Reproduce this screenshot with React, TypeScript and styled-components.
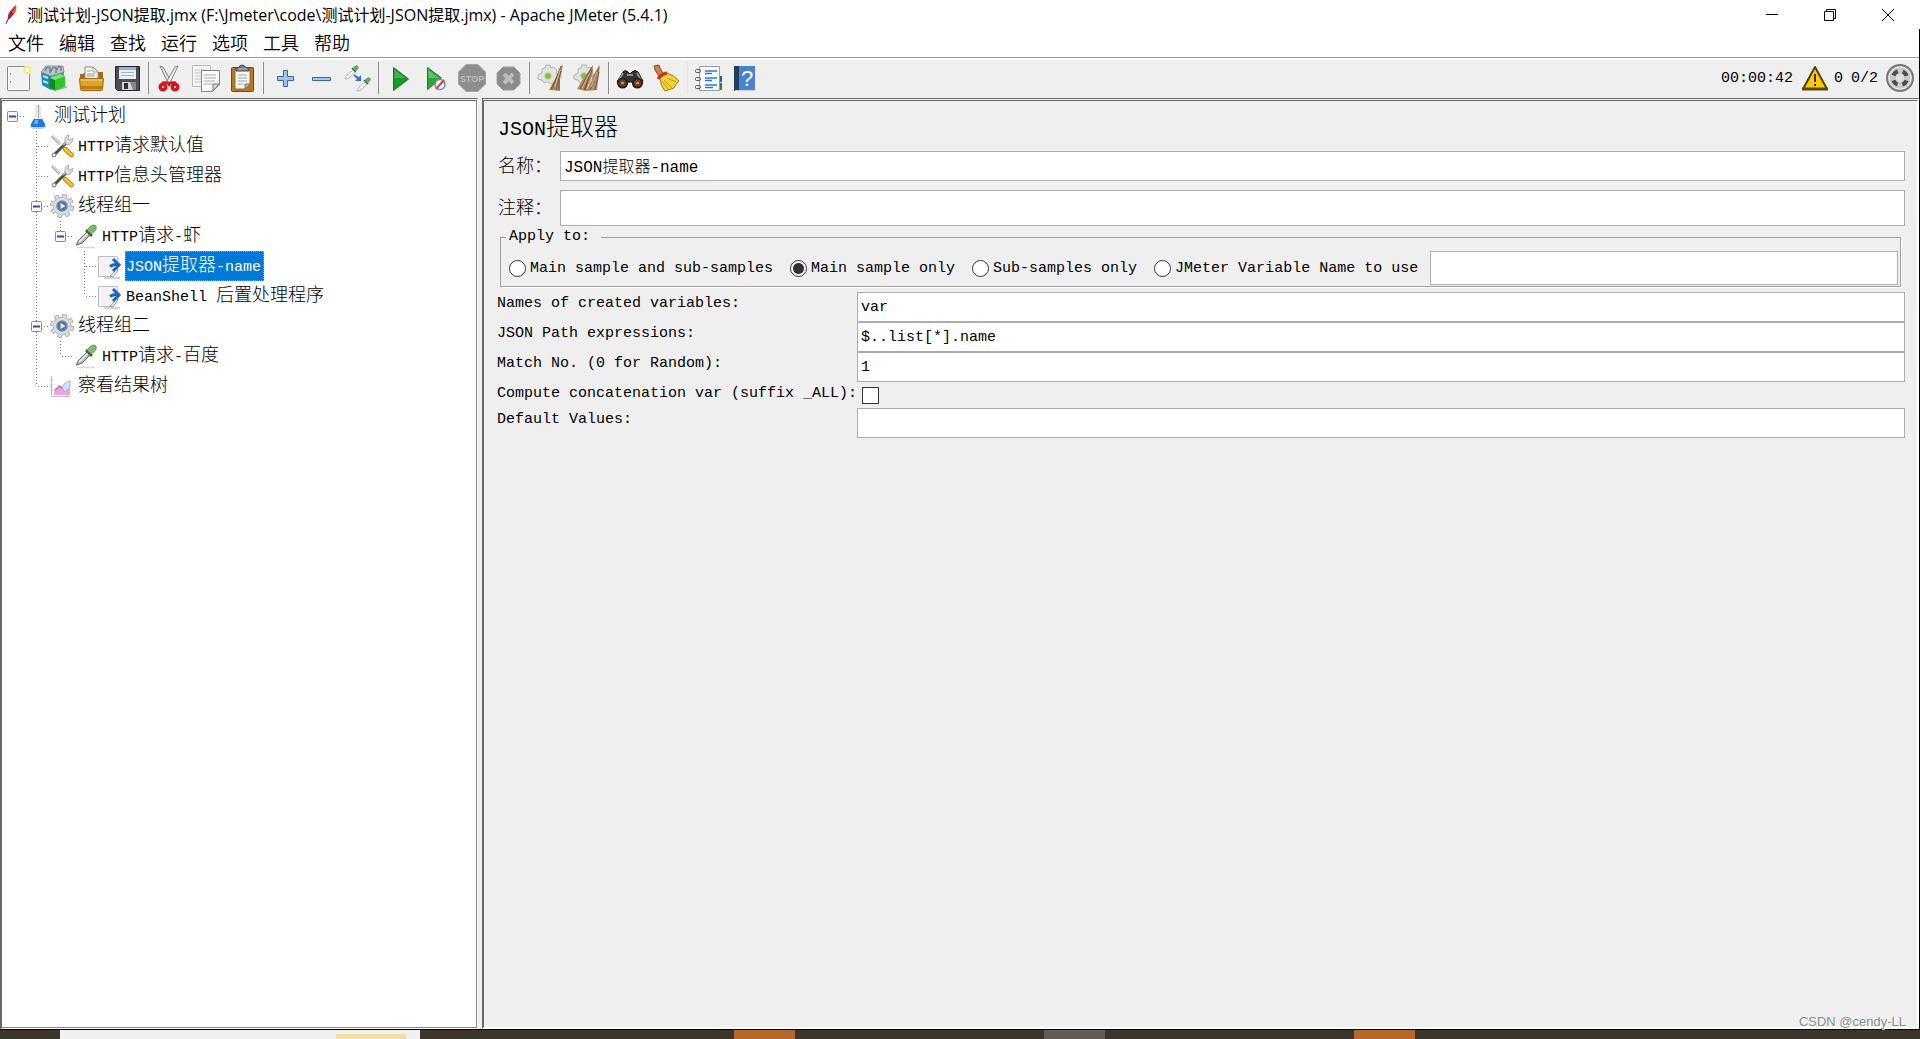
import React, { useState } from 'react';
import styled, { createGlobalStyle, css } from 'styled-components';

const mono = "'Liberation Mono', 'Noto Sans CJK SC', monospace";
const ui = "'Open Sans', 'Noto Sans CJK SC', sans-serif";

const GlobalStyle = createGlobalStyle`
  *, *::before, *::after { box-sizing: border-box; }
  body { margin: 0; background: #efefef; color: #000; font-family: ${mono}; font-size: 15px; overflow: hidden; }
  button, input { font: inherit; color: inherit; }
`;

/* ---------- shell ---------- */
const Page = styled.div`
  height: 100vh;
  display: flex;
  flex-direction: column;
`;
const TitleBar = styled.header`
  display: flex;
  align-items: center;
  height: 29px;
  padding: 0 3px 0 5px;
  background: #fff;
  font-family: ${ui};
`;
const WindowTitle = styled.h1`
  flex: 1;
  margin: 0 0 0 8px;
  font-size: 16px;
  font-weight: 400;
  line-height: 28px;
  white-space: nowrap;
`;
const WindowButton = styled.button`
  display: grid;
  place-items: center;
  width: 58px;
  height: 28px;
  padding: 0;
  border: 0;
  background: none;
`;
const Frame = styled.div`
  flex: 1;
  min-height: 0;
  display: flex;
  flex-direction: column;
  border-right: 1px solid #000;
  border-bottom: 1px solid #000;
`;
const MenuBar = styled.nav`
  display: flex;
  gap: 1px;
  height: 29px;
  padding: 0 1px 2px;
  background: #fff;
  border-bottom: 1px solid #a0a0a0;
`;
const MenuButton = styled.button`
  padding: 0 7px;
  border: 0;
  background: none;
  font-family: 'Noto Sans CJK SC', sans-serif;
  font-size: 18px;
  font-weight: 350;
  line-height: 24px;
`;
const Toolbar = styled.div`
  display: flex;
  align-items: center;
  height: 40px;
  padding: 0 5px 2px 1px;
  border-top: 2px solid #fff;
  background: #efefef;
`;
const ToolButton = styled.button`
  display: grid;
  place-items: center;
  width: 36px;
  height: 36px;
  padding: 0;
  border: 0;
  background: none;
`;
const Separator = styled.span<{ $faint?: boolean }>`
  width: 1px;
  height: 32px;
  margin: 0 3px;
  background: ${p => (p.$faint ? '#e6e6e6' : '#8c8c8c')};
`;
const Status = styled.div`
  display: flex;
  align-items: center;
  gap: 8px;
  margin-left: auto;
  white-space: pre;
`;
const Warnings = styled.span`
  display: flex;
  align-items: center;
  gap: 5px;
`;
const Split = styled.main`
  flex: 1;
  min-height: 0;
  display: flex;
  gap: 4px;
`;

/* ---------- text ---------- */
const Han = styled.span<{ $large?: boolean }>`
  font-family: 'Noto Sans CJK SC', sans-serif;
  font-size: ${p => (p.$large ? 24 : 18)}px;
  font-weight: 300;
  line-height: 1;
`;
function Mixed({ children, large }: { children: string; large?: boolean }) {
  return (
    <>
      {children.split(/([\u4e00-\u9fff\uff1a]+)/).map((part, i) =>
        i % 2 ? <Han key={i} $large={large}>{part}</Han> : part
      )}
    </>
  );
}

/* ---------- tree ---------- */
const bevel = css`
  border-top: 3px double #696969;
  border-left: 2px solid #696969;
`;
const TreePane = styled.aside`
  ${bevel}
  flex: 0 0 478px;
  display: flex;
  border-right: 1px solid #fff;
  border-bottom: 1px solid #fff;
`;
const TreeList = styled.ul`
  flex: 1;
  margin: 0;
  padding: 0;
  list-style: none;
  background: #fff;
  border-right: 1px solid #828790;
  border-bottom: 1px solid #828790;
`;
const TreeRow = styled.li`
  display: flex;
  align-items: center;
  height: 30px;
  white-space: pre;
  svg { flex: none; }
`;
const Guides = styled.span`
  display: flex;
`;
const NodeLabel = styled.button<{ $selected?: boolean }>`
  height: 30px;
  margin-left: 3px;
  padding: 1px 2px 0 0;
  border: 1px dotted ${p => (p.$selected ? '#ff8728' : 'transparent')};
  background: ${p => (p.$selected ? '#0078d7' : 'none')};
  color: ${p => (p.$selected ? '#fff' : '#000')};
  line-height: 24px;
  white-space: pre;
`;

type GuideKind = 'blank' | 'line' | 'tee' | 'ell' | 'root' | 'open' | 'openLast';
function Guide({ kind }: { kind: GuideKind }) {
  const box = kind === 'root' || kind === 'open' || kind === 'openLast';
  const dash = { stroke: '#808080', strokeDasharray: '1 2', fill: 'none' };
  return (
    <svg width="24" height="30" viewBox="0 0 24 30">
      {(kind === 'line' || kind === 'tee' || kind === 'open') && <path d="M10.500 0V30" {...dash} />}
      {(kind === 'ell' || kind === 'openLast') && <path d="M10.500 0V15" {...dash} />}
      {kind !== 'line' && kind !== 'blank' && <path d="M12 15.500H22" {...dash} />}
      {box && (
        <>
          <rect x="5.500" y="10.500" width="10" height="10" rx="1" fill="#f7f7f7" stroke="#8a8a8a" />
          <path d="M7 15.500H14" stroke="#2c4f9e" strokeWidth="2" />
        </>
      )}
    </svg>
  );
}

const Flask = () => (
  <svg width="24" height="28" viewBox="0 0 24 28">
    <ellipse cx="12" cy="25" rx="8" ry="2" fill="#c4c4c4" />
    <path d="M10 4h4v9l5 9q1 3-2 3H7q-3 0-2-3l5-9z" fill="#eceff4" stroke="#d3d8df" />
    <path d="M8 17h8l3 5q1 3-2 3H7q-3 0-2-3z" fill="#1d79dc" />
    <path d="M9 18h3v4H8z" fill="#65b4ff" />
    <path d="M12.500 3v13" stroke="#a6adb8" />
  </svg>
);
const Tools = () => (
  <svg width="24" height="26" viewBox="0 0 24 26">
    <path d="M2 3l8 8" stroke="#b0b0b0" strokeWidth="3" />
    <path d="M3 3l7 8" stroke="#eee" />
    <path d="M4 22L17 9" stroke="#4d4d4d" strokeWidth="3" strokeLinecap="round" />
    <path d="M13 12l5-5" stroke="#b0b0b0" strokeWidth="2" />
    <path d="M15 9q-1-6 4-7l-1 4 2 1 3-2q0 6-6 7z" fill="#ddd" stroke="#a0a0a0" strokeWidth=".8" />
    <circle cx="4" cy="22" r="2" fill="#eee" stroke="#777" />
    <path d="M15 16l6.500 6" stroke="#b27d0a" strokeWidth="4.500" strokeLinecap="round" />
    <path d="M15 16l6.500 6" stroke="#fbc62c" strokeWidth="3" strokeLinecap="round" />
  </svg>
);
const Gear = () => (
  <svg width="24" height="26" viewBox="0 0 24 26">
    <circle cx="12" cy="13" r="10" fill="none" stroke="#8e8e8e" strokeWidth="4" strokeDasharray="4.400 3.454" />
    <circle cx="12" cy="13" r="9" fill="#dcdcdc" stroke="#a2a2a2" strokeWidth=".8" />
    <circle cx="12" cy="13" r="10" fill="none" stroke="#dcdcdc" strokeWidth="3" strokeDasharray="3.400 4.454" strokeDashoffset="-.5" />
    <circle cx="12" cy="13" r="5" fill="#4b75ad" stroke="#7287a6" strokeWidth="1.500" />
    <path d="M10.500 10l5 3-5 3z" fill="#eaf2fc" />
  </svg>
);
const Dropper = () => (
  <svg width="24" height="26" viewBox="0 0 24 26">
    <path d="M3 24.500h18" stroke="#d8d8d8" strokeWidth="1.500" />
    <path d="M2 22l3-5 8-8 3 3-8 8-5 2z" fill="#bbb" stroke="#666" />
    <path d="M5 19l9-9" stroke="#f4f4f4" strokeWidth="1.500" />
    <path d="M12 7l6 6" stroke="#3c5c38" strokeWidth="2.500" />
    <path d="M13 7q3-5 8-5 4 4-4 9z" fill="#7fbd6a" stroke="#4d9240" strokeWidth=".8" />
  </svg>
);
const PostProcessor = () => (
  <svg width="24" height="26" viewBox="0 0 24 26">
    <path d="M6 25h16" stroke="#c4c4c4" strokeWidth="1.500" />
    <path d="M.500 3.500h19v14l-6 6H.500z" fill="#f3f3f3" stroke="#c0c0c0" />
    <path d="M12 23q4-2 6-8l2 2-5 7z" fill="#fff" stroke="#777" strokeWidth=".8" />
    <path d="M12 13.500q4-3 9-1.500M15 6l6 6-6 6" fill="none" stroke="#1c63c4" strokeWidth="3" />
  </svg>
);
const Chart = () => (
  <svg width="24" height="26" viewBox="0 0 24 26">
    <path d="M4 22v-5l5-4 6 4 5-3v8z" fill="#eda6d8" />
    <path d="M5 17l5-4 5 5" fill="none" stroke="#db5cae" strokeWidth="1.500" />
    <path d="M12 15q2-6 8-7v6l-5 5z" fill="#cfe2fb" stroke="#8eb6ee" />
    <path d="M1.500 3v20.500H21M0 7h3M0 12h3M0 17h3" fill="none" stroke="#c4bdc9" />
  </svg>
);

type Node = { label: string; icon: React.FC; guides: GuideKind[] };
const nodes: Node[] = [
  { label: '测试计划', icon: Flask, guides: ['root'] },
  { label: 'HTTP请求默认值', icon: Tools, guides: ['blank', 'tee'] },
  { label: 'HTTP信息头管理器', icon: Tools, guides: ['blank', 'tee'] },
  { label: '线程组一', icon: Gear, guides: ['blank', 'open'] },
  { label: 'HTTP请求-虾', icon: Dropper, guides: ['blank', 'line', 'openLast'] },
  { label: 'JSON提取器-name', icon: PostProcessor, guides: ['blank', 'line', 'blank', 'tee'] },
  { label: 'BeanShell 后置处理程序', icon: PostProcessor, guides: ['blank', 'line', 'blank', 'ell'] },
  { label: '线程组二', icon: Gear, guides: ['blank', 'open'] },
  { label: 'HTTP请求-百度', icon: Dropper, guides: ['blank', 'line', 'ell'] },
  { label: '察看结果树', icon: Chart, guides: ['blank', 'ell'] },
];

/* ---------- editor ---------- */
const Editor = styled.section`
  ${bevel}
  flex: 1;
  min-width: 0;
  padding: 12px 12px 0 13px;
  border-right: 2px solid #fff;
  border-bottom: 2px solid #fff;
`;
const Heading = styled.h2`
  margin: 0 0 5px;
  padding-left: 1px;
  font-size: 20px;
  font-weight: 400;
  line-height: 33px;
`;
const FieldRow = styled.div<{ $tall?: boolean }>`
  display: grid;
  grid-template-columns: 63px 1fr;
  align-items: center;
  height: ${p => (p.$tall ? 36 : 30)}px;
  margin-bottom: ${p => (p.$tall ? 0 : 9)}px;
  line-height: 24px;
`;
const FieldLabel = styled.label`
  padding: 3px 0 0 1px;
`;
const TextInput = styled.input<{ $large?: boolean }>`
  min-width: 0;
  width: 100%;
  height: 100%;
  padding: ${p => (p.$large ? '0 3px 3px' : '0 3px')};
  border: 1px solid #abadb3;
  border-radius: 0;
  background: #fff;
  font-size: ${p => (p.$large ? 16 : 15)}px;
  font-weight: ${p => (p.$large ? 300 : 400)};
  outline: 0;
`;
const ApplyTo = styled.fieldset`
  display: flex;
  align-items: center;
  min-width: 0;
  margin: 0 4px 5px 3px;
  padding: 3px 2px 1px 8px;
  border: 1px solid #a0a0a0;
  box-shadow: 1px 1px 0 #fff;
`;
const Legend = styled.legend`
  width: 95px;
  margin-left: -3px;
  padding: 0 3px;
  line-height: 22px;
`;
const Option = styled.label`
  display: flex;
  align-items: center;
  gap: 4px;
  margin-right: 17px;
  white-space: nowrap;
  &:last-of-type { margin-right: 12px; }
`;
const Radio = styled.input`
  appearance: none;
  width: 17px;
  height: 17px;
  margin: 0;
  border: 1px solid #333;
  border-radius: 50%;
  background: #fff;
  &:checked { background: radial-gradient(circle, #333 5px, #fff 6px); }
`;
const VariableField = styled.div`
  flex: 1;
  height: 34px;
`;
const Properties = styled.div`
  display: grid;
  grid-template-columns: auto 1fr;
  grid-template-rows: 30px 30px 30px 26px 30px;
`;
const PropertyLabel = styled.label`
  line-height: 24px;
  white-space: nowrap;
`;
const Checkbox = styled.input`
  appearance: none;
  width: 17px;
  height: 17px;
  margin: 5px;
  border: 1px solid #333;
  background: #fff;
  &:checked { background: #333; box-shadow: inset 0 0 0 3px #fff; }
`;

/* ---------- desktop strip ---------- */
const Taskbar = styled.footer`
  display: flex;
  flex: none;
  height: 9px;
  overflow: hidden;
  background: #3c352b;
`;
const TaskSlot = styled.span<{ $width: number; $color?: string; $inset?: boolean }>`
  width: ${p => p.$width}px;
  border-top: ${p => (p.$inset ? '4px solid #f0f0f0' : '0')};
  background: ${p => p.$color ?? 'transparent'};
`;
const Watermark = styled.span`
  position: absolute;
  right: 14px;
  bottom: 8px;
  color: #8a8a8a;
  font: 14px/18px 'Liberation Sans', sans-serif;
  font-size: 13px;
  text-shadow: 1px 1px 0 #fff;
`;

/* ---------- toolbar icons ---------- */
const Icon = ({ children }: { children: React.ReactNode }) => (
  <svg width="28" height="28" viewBox="0 0 28 28" fill="none" aria-hidden="true">{children}</svg>
);
const NewIcon = () => (
  <Icon>
    <rect x="2.500" y="2.500" width="22" height="24" rx="1" fill="#f1f1f1" stroke="#858585" />
    <rect x="3.500" y="3.500" width="20" height="22" stroke="#fff" />
    <path d="M5.500 9v2M5.500 17v2" stroke="#999" />
    <circle cx="22.500" cy="6" r="4.500" fill="#f8f0a0" />
    <path d="M22.500 2v8M18.500 6h8M20 3.500l5 5M25 3.500l-5 5" stroke="#f2e24a" />
    <circle cx="22.500" cy="6" r="2" fill="#fffde8" />
  </Icon>
);
const TemplatesIcon = () => (
  <Icon>
    <path d="M0 8l10 3v15l-9-5z" fill="#1b86ba" />
    <path d="M10 11l13-4v14l-13 5z" fill="#3c9cc8" />
    <path d="M0 8L5 2h17l1 6-13 4z" fill="#b6c3c8" stroke="#8b979c" />
    <path d="M4 7q1-5 5-3v5M10 8q1-6 5-4v5M16 6q1-5 4-3v4" stroke="#76858c" strokeWidth="1.500" />
    <path d="M2 12l5 2M2 17l5 2" stroke="#bce7fb" strokeWidth="2" />
    <path d="M9 14l5 2v11l-5-3z" fill="#138a17" />
    <path d="M14 16l10-4v11l-10 4z" fill="#2fc52d" />
    <path d="M9 14l10-4 5 2-10 4z" fill="#7be960" />
    <path d="M24 22l3 1-11 4z" fill="#aaa" />
  </Icon>
);
const OpenIcon = () => (
  <Icon>
    <path d="M3 10h3l2-2h18v16H3z" fill="#a86d10" />
    <path d="M8 15V3h8l5 5v8z" fill="#fafafa" stroke="#888" />
    <path d="M16 3v5h5M10 7h4M10 10h8M10 12h8" stroke="#999" />
    <path d="M2.500 14.500h24l-1 11q0 1-1 1h-20q-1 0-1-1z" fill="#dfa02e" stroke="#a56a0c" />
    <path d="M4 16h21" stroke="#f7d383" />
    <path d="M4 22h21v3H4z" fill="#bf7d13" />
  </Icon>
);
const SaveIcon = () => (
  <Icon>
    <path d="M2.500 2.500h24v24h-22l-2-2z" fill="#4b4f55" stroke="#25282b" />
    <path d="M6 3h17v12H6z" fill="#eaf1f8" />
    <path d="M6 3h17v3H6z" fill="#8ab5e2" />
    <path d="M8 8.500h13M8 11.500h13" stroke="#a9b2bb" />
    <path d="M9 18h14v8H9z" fill="#d1d3d5" />
    <path d="M11 19h4v6h-4z" fill="#333" />
    <path d="M17 18h6v8h-3z" fill="#888" />
  </Icon>
);
const CutIcon = () => (
  <Icon>
    <path d="M4 2l3 1 8 14-3 2z" fill="#ddd" stroke="#858585" />
    <path d="M22 2l-3 1-8 14 3 2z" fill="#eee" stroke="#858585" />
    <circle cx="7" cy="23" r="2.800" stroke="#d3171a" strokeWidth="3.500" />
    <circle cx="19" cy="23" r="2.800" stroke="#d3171a" strokeWidth="3.500" />
    <path d="M6 19q6-1 7 1 1-2 7-1" stroke="#d3171a" strokeWidth="3" />
  </Icon>
);
const CopyIcon = () => (
  <Icon>
    <path d="M.500 1.500h18v21H.500z" fill="#f3f3f3" stroke="#bbb" />
    <path d="M3 6h11M3 9h6M3 12h6M3 15h6M3 18h6" stroke="#c4c4c4" />
    <path d="M9.500 6.500h18v14l-7 7h-11z" fill="#fafafa" stroke="#858585" />
    <path d="M12 11h12M12 14h12M12 17h11M12 20h8" stroke="#aaa" />
    <path d="M27 20h-6v7z" fill="#ddd" stroke="#777" />
  </Icon>
);
const PasteIcon = () => (
  <Icon>
    <rect x="3.500" y="3.500" width="22" height="24" rx="1" fill="#bd7619" stroke="#784607" />
    <path d="M7 6h15v14l-5 5H7z" fill="#f8f8f8" stroke="#8b6b42" />
    <path d="M10 11h9M10 14h9M10 17h9M10 20h5" stroke="#a0a0a0" />
    <path d="M22 20h-5v5z" fill="#bbb" stroke="#777" />
    <path d="M8 7V4h3q0-3 3-3t4 3h3v3z" fill="#777" stroke="#4f4f4f" />
    <path d="M10 5h9" stroke="#ccc" />
  </Icon>
);
const PlusIcon = () => (
  <Icon><path d="M12.500 6.500h4v6h6v4h-6v6h-4v-6h-6v-4h6z" fill="#a3c4e8" stroke="#3568a5" /></Icon>
);
const MinusIcon = () => (
  <Icon><path d="M5.500 13.500h18v3h-18z" fill="#a8c7ea" stroke="#3568a5" /></Icon>
);
const ToggleIcon = () => (
  <Icon>
    <path d="M2 15l2-4 6-5 2 2-6 6z" fill="#fafafa" stroke="#b4b4b4" />
    <path d="M9 4l4 4" stroke="#315d30" strokeWidth="1.500" />
    <path d="M10 4q3-4 5-2t-2 5z" fill="#66a464" />
    <path d="M14 27l2-4 6-5 2 2-6 6z" fill="#fafafa" stroke="#b4b4b4" />
    <path d="M21 16l4 4" stroke="#315d30" strokeWidth="1.500" />
    <path d="M22 16q3-4 5-2t-2 5z" fill="#66a464" />
    <path d="M11 11l5 4" stroke="#2774e8" strokeWidth="2" />
    <path d="M18 11v6h-6z" fill="#2774e8" />
  </Icon>
);
const StartIcon = () => (
  <Icon>
    <path d="M7.500 3.500L22.500 15 7.500 26.500z" fill="#169c24" stroke="#0d7420" />
    <path d="M8.500 6l11 8H8.500z" fill="#4bac56" />
  </Icon>
);
const StartNoPauseIcon = () => (
  <Icon>
    <path d="M5.500 3.500L19.500 14 5.500 25.500z" fill="#2ba736" stroke="#168032" />
    <path d="M6.500 6l10 8h-10z" fill="#6abc72" />
    <circle cx="18" cy="20.500" r="5" fill="#fff" stroke="#6e8db8" strokeWidth="1.500" />
    <path d="M14 25l8-9" stroke="#e23b3b" strokeWidth="2" />
  </Icon>
);
const StopText = styled.text`
  font: 700 9px 'Liberation Sans', sans-serif;
`;
const StopIcon = () => (
  <Icon>
    <path d="M8 .500h12L27.500 8v12L20 27.500H8L.500 20V8z" fill="#8e8e8e" stroke="#a4a4a4" />
    <StopText x="14" y="17.500" textAnchor="middle" fill="#bdbdbd">STOP</StopText>
  </Icon>
);
const ShutdownIcon = () => (
  <Icon>
    <path d="M9 3h11l6 6v11l-6 6H9l-6-6V9z" fill="#8b8b8b" stroke="#a0a0a0" />
    <path d="M10 10l9 9M19 10l-9 9" stroke="#bdbdbd" strokeWidth="4" />
  </Icon>
);
const Cog = () => (
  <>
    <path d="M5 5l3-1 1-3h4l1 3 3-1 3 3-1 3 2 2v3l-3 2v3l-4 1-3-2-4 1-2-3-4-1V11l4-2z" fill="#e2e2e2" stroke="#b4b4b4" />
    <circle cx="11" cy="12" r="3.200" fill="#74c92a" stroke="#b8c9a8" />
  </>
);
const ClearIcon = () => (
  <Icon>
    <Cog />
    <path d="M24 2l2-1-3 15v11l-11-1 6-11z" fill="#b08a62" />
    <path d="M24 2l-9 23M24 7l-5 19M22 15v11M18 17l-4 8" stroke="#7a5736" />
    <path d="M23 6l-5 17" stroke="#d4b48e" />
  </Icon>
);
const ClearAllIcon = () => (
  <Icon>
    <Cog />
    <path d="M20 1L10 15 4 25l9 2 6-11zM27 1l-3 25-11 1 5-13z" fill="#b08a62" />
    <path d="M19 3L7 25M19 6l-8 20M26 3l-9 23M26 8l-4 18M16 13l-4 13" stroke="#7a5736" />
    <path d="M17 9L9 24M24 8l-6 15" stroke="#d4b48e" />
  </Icon>
);
const SearchIcon = () => (
  <Icon>
    <path d="M7 8q2-3 5 0l2 2 2-2q3-3 6 0l5 9-4 6h-5l-2-5h-4l-2 5H5l-4-5z" fill="#343434" stroke="#111" />
    <path d="M7 9l-4 7M21 9l4 7M11 11h6" stroke="#8d8d8d" strokeWidth="2" />
    <circle cx="6.500" cy="19" r="4.500" fill="#793f1d" stroke="#222" strokeWidth="2" />
    <circle cx="21.500" cy="19" r="4.500" fill="#793f1d" stroke="#222" strokeWidth="2" />
    <path d="M5 19h3M20 19h3" stroke="#c58b64" strokeWidth="2" />
  </Icon>
);
const BroomIcon = () => (
  <Icon>
    <path d="M2 2l5-1 1 3 4 7-4 3-5-8z" fill="#c78442" stroke="#855018" />
    <path d="M8 14l7-5q7 2 12 8l-3 3-2 4-9 3Q8 21 8 14z" fill="#f2d53a" stroke="#a57a0b" />
    <path d="M15 14l9 4M12 16l8 8M10 17l6 8" stroke="#c49711" />
    <path d="M6 15q3-5 9-6" stroke="#d22b1d" strokeWidth="3" />
  </Icon>
);
const ListIcon = () => (
  <Icon>
    <path d="M23 12h4v6h-4z" fill="#0b63e5" />
    <path d="M23 19h4v7h-4z" fill="#278828" />
    <path d="M4.500 2.500h20v24h-20z" fill="#fff" stroke="#9a9a9a" />
    <path d="M10 7h12M10 9.500h7M10 14h12M10 16.500h7M10 21h12M10 23.500h8" stroke="#2277e8" strokeWidth="1.500" />
    <rect x=".500" y="5.500" width="5" height="3" rx="1" stroke="#555" />
    <rect x=".500" y="13.500" width="5" height="3" rx="1" stroke="#555" />
    <rect x=".500" y="21.500" width="5" height="3" rx="1" stroke="#555" />
  </Icon>
);
const HelpText = styled.text`
  font: 22px 'Liberation Sans', sans-serif;
`;
const HelpIcon = () => (
  <Icon>
    <path d="M4 2h20v24H4z" fill="#4684d3" />
    <path d="M3 2h5v25H3z" fill="#263e5b" />
    <path d="M4 26.500h20" stroke="#ccc" />
    <HelpText x="16" y="22" textAnchor="middle" fill="#fff">?</HelpText>
  </Icon>
);
const WarningIcon = () => (
  <Icon>
    <path d="M14 3l12 22H2z" fill="#fccb00" stroke="#4f3f10" strokeWidth="2" strokeLinejoin="round" />
    <path d="M1 25h26" stroke="#5d4a0a" strokeWidth="3" />
    <path d="M14 10v8" stroke="#372c0e" strokeWidth="2" />
    <path d="M14 20v2" stroke="#372c0e" strokeWidth="2" />
  </Icon>
);
const RunStateIcon = () => (
  <Icon>
    <circle cx="14" cy="14" r="13" fill="#c9c9c9" stroke="#777" strokeWidth="2" />
    <circle cx="14" cy="14" r="11" stroke="#ececec" />
    <circle cx="14" cy="14" r="7" stroke="#4d4d4d" strokeWidth="4" strokeDasharray="6 5" strokeDashoffset="-2.500" />
    <circle cx="14" cy="14" r="4" fill="#dedede" />
  </Icon>
);
const Feather = () => (
  <svg width="14" height="20" viewBox="0 0 14 20" aria-hidden="true">
    <path d="M3 15Q2 8 7 4l4-4q1 5-2 9t-6 6z" fill="#c32049" />
    <path d="M7 4l4-4q1 4-1 8H6z" fill="#ee6c20" />
    <path d="M1 19Q4 10 10 2" stroke="#672367" fill="none" />
  </svg>
);

const toolGroups: [string, React.FC][][] = [
  [['New', NewIcon], ['Templates', TemplatesIcon], ['Open', OpenIcon], ['Save', SaveIcon]],
  [['Cut', CutIcon], ['Copy', CopyIcon], ['Paste', PasteIcon]],
  [['Expand All', PlusIcon], ['Collapse All', MinusIcon], ['Toggle', ToggleIcon]],
  [['Start', StartIcon], ['Start no pauses', StartNoPauseIcon], ['Stop', StopIcon], ['Shutdown', ShutdownIcon]],
  [['Clear', ClearIcon], ['Clear All', ClearAllIcon]],
  [['Search', SearchIcon], ['Reset Search', BroomIcon]],
  [['Function Helper', ListIcon], ['Help', HelpIcon]],
];
const menus = ['文件', '编辑', '查找', '运行', '选项', '工具', '帮助'];
const scopes = ['Main sample and sub-samples', 'Main sample only', 'Sub-samples only', 'JMeter Variable Name to use'];

export default function App() {
  const [selected, setSelected] = useState(5);
  const [scope, setScope] = useState(1);
  return (
    <Page>
      <GlobalStyle />
      <TitleBar>
        <Feather />
        <WindowTitle>测试计划-JSON提取.jmx (F:\Jmeter\code\测试计划-JSON提取.jmx) - Apache JMeter (5.4.1)</WindowTitle>
        <WindowButton aria-label="Minimize">
          <svg width="14" height="14"><path d="M1 6.500h12" stroke="#000" /></svg>
        </WindowButton>
        <WindowButton aria-label="Restore">
          <svg width="14" height="14" fill="none" stroke="#000"><path d="M1.500 3.500h9v9h-9zM3.500 3V1.500h9v9H11" /></svg>
        </WindowButton>
        <WindowButton aria-label="Close">
          <svg width="14" height="14" stroke="#000"><path d="M1 1l12 12M13 1L1 13" /></svg>
        </WindowButton>
      </TitleBar>
      <Frame>
        <MenuBar>{menus.map(m => <MenuButton key={m}>{m}</MenuButton>)}</MenuBar>
        <Toolbar>
          {toolGroups.map((group, g) => (
            <React.Fragment key={g}>
              {g > 0 && <Separator $faint={g === toolGroups.length - 1} />}
              {group.map(([name, Glyph]) => (
                <ToolButton key={name} aria-label={name}><Glyph /></ToolButton>
              ))}
            </React.Fragment>
          ))}
          <Status>
            <span>00:00:42</span>
            <Warnings><WarningIcon />0</Warnings>
            <span>0/2</span>
            <RunStateIcon />
          </Status>
        </Toolbar>
        <Split>
          <TreePane>
            <TreeList>
              {nodes.map(({ label, icon: Glyph, guides }, i) => (
                <TreeRow key={label}>
                  <Guides>{guides.map((kind, k) => <Guide key={k} kind={kind} />)}</Guides>
                  <Glyph />
                  <NodeLabel $selected={i === selected} onClick={() => setSelected(i)}>
                    <Mixed>{label}</Mixed>
                  </NodeLabel>
                </TreeRow>
              ))}
            </TreeList>
          </TreePane>
          <Editor>
            <Heading><Mixed large>JSON提取器</Mixed></Heading>
            <FieldRow>
              <FieldLabel htmlFor="name"><Mixed>名称：</Mixed></FieldLabel>
              <TextInput id="name" $large defaultValue="JSON提取器-name" />
            </FieldRow>
            <FieldRow $tall>
              <FieldLabel htmlFor="comment"><Mixed>注释：</Mixed></FieldLabel>
              <TextInput id="comment" />
            </FieldRow>
            <ApplyTo>
              <Legend>Apply to:</Legend>
              {scopes.map((s, i) => (
                <Option key={s}>
                  <Radio type="radio" name="scope" checked={scope === i} onChange={() => setScope(i)} />
                  {s}
                </Option>
              ))}
              <VariableField><TextInput aria-label="JMeter Variable Name" /></VariableField>
            </ApplyTo>
            <Properties>
              <PropertyLabel htmlFor="vars">Names of created variables:</PropertyLabel>
              <TextInput id="vars" defaultValue="var" />
              <PropertyLabel htmlFor="paths">JSON Path expressions:</PropertyLabel>
              <TextInput id="paths" defaultValue="$..list[*].name" />
              <PropertyLabel htmlFor="match">Match No. (0 for Random):</PropertyLabel>
              <TextInput id="match" defaultValue="1" />
              <PropertyLabel htmlFor="concat">Compute concatenation var (suffix _ALL):</PropertyLabel>
              <Checkbox id="concat" type="checkbox" />
              <PropertyLabel htmlFor="defaults">Default Values:</PropertyLabel>
              <TextInput id="defaults" />
            </Properties>
          </Editor>
        </Split>
      </Frame>
      <Taskbar>
        <TaskSlot $width={60} />
        <TaskSlot $width={276} $color="#f0f0f0" />
        <TaskSlot $width={70} $color="#f3dfa6" $inset />
        <TaskSlot $width={14} $color="#f0f0f0" />
        <TaskSlot $width={314} />
        <TaskSlot $width={61} $color="#b5682b" />
        <TaskSlot $width={249} />
        <TaskSlot $width={61} $color="#625d54" />
        <TaskSlot $width={249} />
        <TaskSlot $width={61} $color="#b5682b" />
      </Taskbar>
      <Watermark>CSDN @cendy-LL</Watermark>
    </Page>
  );
}
